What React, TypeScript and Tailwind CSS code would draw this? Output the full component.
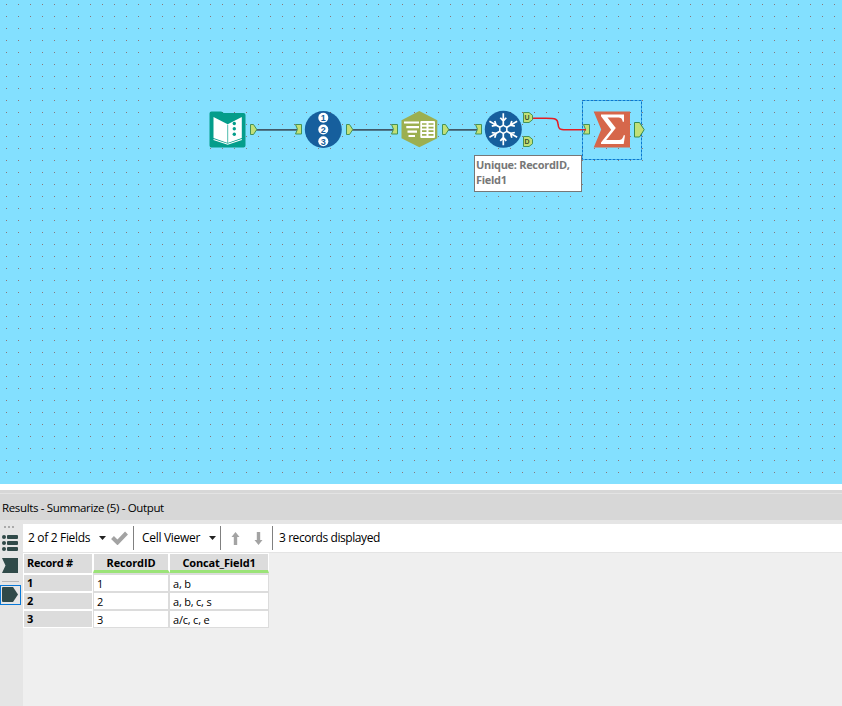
import type { ReactNode } from "react";

const records = [
  { id: "1", recordId: "1", concat: "a, b" },
  { id: "2", recordId: "2", concat: "a, b, c, s" },
  { id: "3", recordId: "3", concat: "a/c, c, e" },
];

const fontClass = "font-['Open_Sans','Noto_Sans',sans-serif]";

function Tool({ className, children }: { className: string; children: ReactNode }) {
  return (
    <svg className={`absolute h-[38px] w-[38px] ${className}`} viewBox="0 0 38 38">
      {children}
    </svg>
  );
}

function InputTool() {
  return (
    <Tool className="left-[209px] top-[110px]">
      <path d="M2.500 1.500h9.500q1.500 0 2.500 1.500H34.500q2 0 2 2v30.500q0 2-2 2H2.500q-2 0-2-2V3.500q0-2 2-2z" fill="#049d8b" />
      <path d="M4.500 7l14.200 7.200L32.800 7v21l-14.100 5L4.500 28z" fill="#fff" />
      <path d="M4.500 29.500l14.200 4.700 14.100-4.700" fill="none" stroke="#fff" strokeWidth="1.200" />
      <path d="M18.700 14.700V33" stroke="#049d8b" strokeWidth=".7" />
      <circle cx="25.300" cy="13.500" r="1.700" fill="#049d8b" />
      <circle cx="25.300" cy="18.800" r="1.700" fill="#049d8b" />
      <circle cx="25.300" cy="24.300" r="1.700" fill="#049d8b" />
    </Tool>
  );
}

function RecordIdTool() {
  return (
    <Tool className="left-[304px] top-[110px]">
      <circle cx="19.300" cy="19.500" r="18.500" fill="#165f9d" />
      {["1", "2", "3"].map((n, i) => (
        <g key={n}>
          <circle cx="19.300" cy={7.8 + i * 11.7} r="5" fill="#fff" />
          <text x="19.300" y={11.1 + i * 11.7} textAnchor="middle" className="font-['Liberation_Sans',sans-serif] text-[9px] font-bold" fill="#165f9d">
            {n}
          </text>
        </g>
      ))}
    </Tool>
  );
}

function TransposeTool() {
  return (
    <Tool className="left-[400px] top-[110px]">
      <path d="M19.300 1l18 9.300v18l-18 9-17.800-9v-18z" fill="#9caf50" />
      <path d="M4 12.500h15M6.300 17.200h12.700M7.500 21.700H17M8.500 26h6.500" stroke="#fff" strokeWidth="2.200" />
      <rect x="20.300" y="11" width="14.700" height="17" rx="1" fill="#fff" />
      <path d="M22 14h4.500M28.500 14h5M22 17.600h4.500M28.500 17.600h5M22 21.200h4.500M28.500 21.200h5M22 24.800h4.500M28.500 24.800h5" stroke="#9caf50" strokeWidth="1.700" />
    </Tool>
  );
}

function UniqueTool() {
  return (
    <Tool className="left-[484px] top-[110px]">
      <circle cx="19.300" cy="19.300" r="18.500" fill="#165f9d" />
      <g fill="none" stroke="#fff" strokeWidth="1.700">
        {[0, 60, 120, 180, 240, 300].map((angle) => (
          <g key={angle} transform={`rotate(${angle} 19.300 19.300)`}>
            <path d="M19.300 15.300V3.300M16.300 7.700l3 3.300 3-3.300" />
          </g>
        ))}
        <path d="M19.300 15.300l3.500 2v4l-3.500 2-3.500-2v-4z" fill="#165f9d" strokeWidth="1.500" />
      </g>
    </Tool>
  );
}

function SummarizeTool() {
  return (
    <Tool className="left-[593px] top-[110px]">
      <path d="M.700 1.500H37v36H.700l7.500-18z" fill="#d6674b" />
      <path d="M8 4.500h23v7.200h-1.300c-.6-3.300-1.800-4.200-5-4.200H14.500l8.300 10.500-9.600 12h12c3.400 0 4.400-1.200 5.500-4.700H32l-1.300 8.700H8v-1.500l10.200-12.700L8 6.300z" fill="#fff" />
    </Tool>
  );
}

function Wires() {
  return (
    <svg className="absolute inset-0 h-[484px] w-[842px]" viewBox="0 0 842 484">
      <defs>
        <pattern id="grid" width="12" height="12" patternUnits="userSpaceOnUse">
          <rect x="6" y="4" width="1" height="1" fill="#8a7779" />
        </pattern>
      </defs>
      <rect width="842" height="484" fill="url(#grid)" />
      <path d="M256 129.800h41M352 129.800h41M448 129.800h29" stroke="#40596a" strokeWidth="1.800" />
      <g fill="#c1e077" stroke="#459257" strokeWidth="1">
        <path d="M250.500 124.500h3l3.300 5-3.300 5h-3zM346.500 124.500h3l3.300 5-3.300 5h-3zM442.500 124.500h3l3.300 5-3.300 5h-3z" />
        <path d="M295.500 124.500h6v9.500h-6l2-4.700zM391.500 124.500h6v9.500h-6l2-4.700zM475.500 124.500h6v9.500h-6l2-4.700zM583.500 124.500h6v9.500h-6l2-4.700z" />
        <path d="M523.500 112.500h5.500l3.500 2.800v4.500l-3.500 2.700h-5.500zM523.500 136.500h5.500l3.500 2.800v4.500l-3.500 2.700h-5.500z" />
      </g>
      <g className="font-['Liberation_Sans',sans-serif] text-[7px] font-bold" fill="#37512c" textAnchor="middle">
        <text x="527" y="120.200">U</text>
        <text x="527" y="144.200">D</text>
      </g>
      <path d="M533 118.300h13c10 0 11.500.700 12 5.500s1 5.900 8 5.900h20" fill="none" stroke="#e51d24" strokeWidth="1.500" />
      <rect x="582.500" y="100.500" width="59" height="59" fill="none" stroke="#0878d0" strokeDasharray="3 1" />
      <path d="M634.500 122.500h5l4.700 7.200-4.700 7.300h-5z" fill="#c1e077" stroke="#368b50" />
    </svg>
  );
}

function Canvas() {
  return (
    <div className="relative h-[484px] overflow-hidden bg-[#83e0ff]">
      <Wires />
      <InputTool />
      <RecordIdTool />
      <TransposeTool />
      <UniqueTool />
      <SummarizeTool />
      <div className="absolute left-[474px] top-[155px] h-[37px] w-[108px] whitespace-nowrap border border-[#777] bg-white pl-px pt-px text-[11px] font-bold leading-[15px] text-[#777]">
        <div className="tracking-[-0.3px]">Unique: RecordID,</div>
        <div className="tracking-[-0.3px]">Field1</div>
      </div>
    </div>
  );
}

function Sidebar() {
  return (
    <div className="w-[23px] shrink-0 bg-[#e5e5e5]">
      <svg className="h-[186px] w-[23px]" viewBox="0 520 23 186">
        <path d="M4 527h2M8 527h2M12 527h2" stroke="#aaa" strokeWidth="2" />
        <g fill="#304a49">
          <circle cx="4" cy="537" r="2" />
          <circle cx="4" cy="543" r="2" />
          <circle cx="4" cy="549" r="2" />
          <rect x="7" y="535" width="11" height="4" rx="1" />
          <rect x="7" y="541" width="11" height="4" rx="1" />
          <rect x="7" y="547" width="11" height="4" rx="1" />
          <path d="M2 558h16v15H2l3.500-7.500z" />
        </g>
        <path d="M2 581.500h17" stroke="#b8b8b8" />
        <rect x=".500" y="585.500" width="20" height="19" fill="#e5e5e5" stroke="#0878d7" />
        <path d="M3 587h10l5 7.500-5 7.500H3q-1 0-1-1v-13q0-1 1-1z" fill="#304a49" />
      </svg>
    </div>
  );
}

function Caret() {
  return (
    <svg className="h-1 w-[7px] shrink-0" viewBox="0 0 7 4">
      <path d="M0 0h7L3.500 4z" fill="#222" />
    </svg>
  );
}

function Toolbar() {
  return (
    <div className="flex h-[28px] items-center whitespace-nowrap bg-white pl-[5px]">
      <span className="w-[71px] tracking-[-0.33px]">2 of 2 Fields</span>
      <Caret />
      <svg className="ml-[5px] h-[14px] w-[17px] shrink-0" viewBox="0 0 17 14">
        <path d="M1.500 6.500l5 5L15.500 2" fill="none" stroke="#a3a3a3" strokeWidth="4" />
      </svg>
      <div className="ml-[5px] h-[24px] w-px bg-[#808080]" />
      <span className="ml-[8px] w-[67px] tracking-[-0.3px]">Cell Viewer</span>
      <Caret />
      <div className="ml-[4px] h-[24px] w-px bg-[#808080]" />
      <svg className="ml-[10px] h-[15px] w-[9px] shrink-0" viewBox="0 0 9 15">
        <path d="M4.500 1l4 5H6.200v8H2.800V6H.500z" fill="#a3a3a3" />
      </svg>
      <svg className="ml-[14px] h-[15px] w-[9px] shrink-0" viewBox="0 0 9 15">
        <path d="M4.500 14l4-5H6.200V1H2.800v8H.500z" fill="#a3a3a3" />
      </svg>
      <div className="ml-[9px] h-[24px] w-px bg-[#808080]" />
      <span className="ml-[6px] tracking-[-0.42px]">3 records displayed</span>
    </div>
  );
}

function ResultsTable() {
  return (
    <table className="w-[246px] table-fixed border-separate border-spacing-0 text-[11px] leading-[16px]">
      <colgroup>
        <col className="w-[70px]" />
        <col className="w-[77px]" />
        <col className="w-[99px]" />
      </colgroup>
      <thead>
        <tr className="h-[20px]">
          <th className="border-x border-t border-white bg-[#dcdcdc] p-0 pb-px pl-[3px] text-left tracking-[-0.3px]">Record #</th>
          <th className="border-b-3 border-l border-r-2 border-t border-white border-b-[#9be378] bg-[#dcdcdc] p-0 pt-px leading-[15px] tracking-[-0.15px]">RecordID</th>
          <th className="border-b-3 border-r border-t border-white border-b-[#9be378] bg-[#dcdcdc] p-0 pt-px leading-[15px] tracking-[-0.15px]">Concat_Field1</th>
        </tr>
      </thead>
      <tbody>
        {records.map((record) => (
          <tr key={record.id} className="h-[18px]">
            <td className="border-x border-t-2 border-white bg-[#dcdcdc] p-0 pb-px pl-[3px] font-bold leading-[14px]">{record.id}</td>
            <td className="border-l border-r-2 border-t-2 border-[#dcdcdc] bg-white p-0 pl-[3px] pt-[2px] leading-[14px]">{record.recordId}</td>
            <td className="border-r border-t-2 border-[#dcdcdc] bg-white p-0 pl-[3px] pt-[2px] leading-[14px] tracking-[-0.2px]">{record.concat}</td>
          </tr>
        ))}
        <tr className="h-px">
          <td className="bg-white p-0" />
          <td className="bg-[#dcdcdc] p-0" colSpan={2} />
        </tr>
      </tbody>
    </table>
  );
}

export default function App() {
  return (
    <div className={`h-[706px] w-[842px] overflow-hidden bg-[#efefef] text-[12px] text-black ${fontClass}`}>
      <Canvas />
      <div className="h-[6px] bg-white" />
      <div className="h-[30px] bg-[#d7d7d7] pt-[3px]">
        <div className="h-px bg-[#e3e3e3]" />
        <div className="pl-[2px] pt-[5px] text-[11.5px] leading-[18px] tracking-[-0.35px]">Results - Summarize (5) - Output</div>
      </div>
      <div className="flex h-[186px]">
        <Sidebar />
        <div className="flex-1">
          <div className="h-[4px] bg-[#e5e5e5]" />
          <Toolbar />
          <div className="h-px bg-[#e4e4e4]" />
          <ResultsTable />
        </div>
      </div>
    </div>
  );
}
